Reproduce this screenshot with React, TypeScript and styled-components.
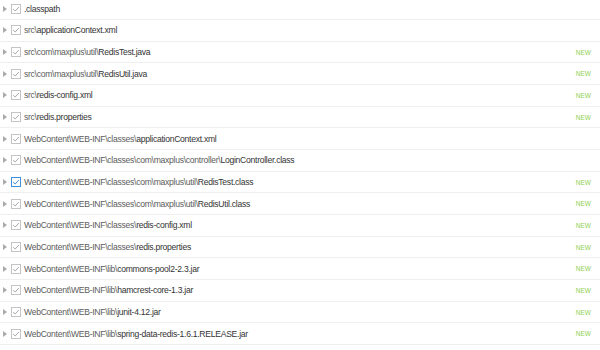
import * as React from 'react'
import styled, { createGlobalStyle } from 'styled-components'

const GlobalStyle = createGlobalStyle`
  html, body {
    margin: 0;
    padding: 0;
    background: #fff;
    overflow: hidden;
  }
`

const List = styled.div`
  margin-top: -1.5px;
  font-family: "Liberation Sans", Arial, sans-serif;
  font-size: 8.6px;
  letter-spacing: -0.28px;
  color: #555;
`

const Row = styled.div`
  display: flex;
  align-items: center;
  height: 20.67px;
  border-bottom: 1px solid #efefef;
  padding-left: 3px;
  padding-right: 9px;
`

const Arrow = styled.span`
  width: 0;
  height: 0;
  border-top: 3px solid transparent;
  border-bottom: 3px solid transparent;
  border-left: 4px solid #aaa;
  margin-right: 4px;
`

const Box = styled.span<{ $active?: boolean }>`
  box-sizing: border-box;
  width: 10px;
  height: 10px;
  border: 1px solid ${p => (p.$active ? '#3f8fdc' : '#c4c4c4')};
  display: flex;
  align-items: center;
  justify-content: center;
  margin-right: 3px;
  background: #fff;
`

const Name = styled.span`
  flex: 1;
  white-space: nowrap;
`

const Dir = styled.span`
  color: #5c5c5c;
`

const File = styled.span`
  color: #333;
`

const Badge = styled.span`
  font-size: 6.5px;
  letter-spacing: 0;
  color: #8fd14f;
`

interface IItem {
  path: string
  isNew?: boolean
  active?: boolean
}

const items: IItem[] = [
  { path: '.classpath' },
  { path: 'src\\applicationContext.xml' },
  { path: 'src\\com\\maxplus\\util\\RedisTest.java', isNew: true },
  { path: 'src\\com\\maxplus\\util\\RedisUtil.java', isNew: true },
  { path: 'src\\redis-config.xml', isNew: true },
  { path: 'src\\redis.properties', isNew: true },
  { path: 'WebContent\\WEB-INF\\classes\\applicationContext.xml' },
  { path: 'WebContent\\WEB-INF\\classes\\com\\maxplus\\controller\\LoginController.class' },
  { path: 'WebContent\\WEB-INF\\classes\\com\\maxplus\\util\\RedisTest.class', isNew: true, active: true },
  { path: 'WebContent\\WEB-INF\\classes\\com\\maxplus\\util\\RedisUtil.class', isNew: true },
  { path: 'WebContent\\WEB-INF\\classes\\redis-config.xml', isNew: true },
  { path: 'WebContent\\WEB-INF\\classes\\redis.properties', isNew: true },
  { path: 'WebContent\\WEB-INF\\lib\\commons-pool2-2.3.jar', isNew: true },
  { path: 'WebContent\\WEB-INF\\lib\\hamcrest-core-1.3.jar', isNew: true },
  { path: 'WebContent\\WEB-INF\\lib\\junit-4.12.jar', isNew: true },
  { path: 'WebContent\\WEB-INF\\lib\\spring-data-redis-1.6.1.RELEASE.jar', isNew: true },
]

const Check = ({ color }: { color: string }) => (
  <svg width="8" height="8" viewBox="0 0 8 8">
    <path d="M1.2 4.2 L3.2 6 L6.8 2" fill="none" stroke={ color } strokeWidth="1" />
  </svg>
)

export default function App() {
  return (
    <>
      <GlobalStyle />
      <List>
        { items.map(item => {
          const idx = item.path.lastIndexOf('\\')
          const dir = item.path.slice(0, idx + 1)
          const file = item.path.slice(idx + 1)
          return (
            <Row key={ item.path }>
              <Arrow />
              <Box $active={ item.active }>
                <Check color={ item.active ? '#3f8fdc' : '#aaa' } />
              </Box>
              <Name>
                <Dir>{ dir }</Dir>
                <File>{ file }</File>
              </Name>
              { item.isNew && <Badge>NEW</Badge> }
            </Row>
          )
        }) }
      </List>
    </>
  )
}
